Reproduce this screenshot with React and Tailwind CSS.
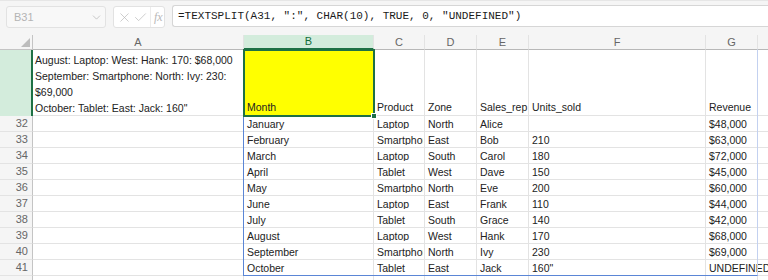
import { X, Check, ChevronDown } from "lucide-react";

const cols = [
  { k: "A", w: "w-[211px]" },
  { k: "B", w: "w-[130px]" },
  { k: "C", w: "w-[51px]" },
  { k: "D", w: "w-[52px]" },
  { k: "E", w: "w-[52px]" },
  { k: "F", w: "w-[177px]" },
  { k: "G", w: "w-[52px]" },
];

const rows = [
  [32, "January", "Laptop", "North", "Alice", "", "$48,000"],
  [33, "February", "Smartphone", "East", "Bob", "210", "$63,000"],
  [34, "March", "Laptop", "South", "Carol", "180", "$72,000"],
  [35, "April", "Tablet", "West", "Dave", "150", "$45,000"],
  [36, "May", "Smartphone", "North", "Eve", "200", "$60,000"],
  [37, "June", "Laptop", "East", "Frank", "110", "$44,000"],
  [38, "July", "Tablet", "South", "Grace", "140", "$42,000"],
  [39, "August", "Laptop", "West", "Hank", "170", "$68,000"],
  [40, "September", "Smartphone", "North", "Ivy", "230", "$69,000"],
  [41, "October", "Tablet", "East", "Jack", "160\"", "UNDEFINED"],
];

const cell = "shrink-0 border-r border-b border-[#e3e3e3] flex items-end pl-[3px] whitespace-nowrap";

export default function App() {
  return (
    <div className="h-[280px] w-[768px] overflow-hidden bg-white text-[#222] font-['Liberation_Sans',Arial,sans-serif]">
      {/* formula bar */}
      <div className="flex h-[35px] items-start border-t border-[#e6e6e6] bg-[#f5f5f5] pt-[4px]">
        <div className="ml-[6px] mt-[1px] flex h-[22px] w-[100px] items-center justify-between rounded-[3px] border border-[#e2e2e2] bg-[#f8f8f8] pl-[7px] pr-[2px] text-[11px] text-[#b4b4b4]">
          <span>B31</span>
          <ChevronDown size={13} strokeWidth={1.3} />
        </div>
        <div className="ml-[7px] mt-[1px] flex h-[22px] w-[52px] items-center rounded-[3px] border border-[#e2e2e2] bg-white pl-[3px] text-[#b8b8b8]">
          <X size={15} strokeWidth={1.1} />
          <Check size={15} strokeWidth={1.1} className="ml-[1px]" />
          <span className="ml-[2px] flex h-full items-center border-l border-[#ececec] pl-[3px] font-['Liberation_Serif',serif] text-[12px] italic leading-none">fx</span>
        </div>
        <div className="ml-[7px] flex h-[22px] flex-1 items-center rounded-l-[3px] border border-r-0 border-[#d6d6d6] bg-white pl-[5px] font-['Liberation_Mono',monospace] text-[11px] text-[#1a1a1a]">
          =TEXTSPLIT(A31, ":", CHAR(10), TRUE, 0, "UNDEFINED")
        </div>
      </div>

      {/* sheet */}
      <div className="relative">
        {/* column headers */}
        <div className="flex h-[15px] text-[11px] leading-none text-[#666]">
          <div className="relative w-[33px] shrink-0 border-r border-b border-[#c4c4c4] bg-[#f5f5f5]">
            <svg className="absolute right-[2px] bottom-[2px]" width="9" height="9" viewBox="0 0 9 9">
              <polygon points="9,0 9,9 0,9" fill="#bdbdbd" />
            </svg>
          </div>
          {cols.map((c) =>
            c.k === "B" ? (
              <div key={c.k} className={`${c.w} shrink-0 flex items-center justify-center border-r border-b-2 border-r-[#e3e3e3] border-b-[#1e7145] bg-[#d3ecdc] text-[#146c3a]`}>
                {c.k}
              </div>
            ) : (
              <div key={c.k} className={`${c.w} shrink-0 flex items-center justify-center border-r border-b border-r-[#e3e3e3] border-b-[#b8b8b8] bg-[#f5f5f5]`}>
                {c.k}
              </div>
            )
          )}
          <div className="flex-1 border-b border-[#b8b8b8] bg-[#f5f5f5]" />
        </div>

        {/* row 31 */}
        <div className="flex h-[66px] text-[10.5px] leading-[16px]">
          <div className="w-[33px] shrink-0 border-r-2 border-[#1e7145] bg-[#d3ecdc]" />
          <div className="w-[211px] shrink-0 border-r border-b border-[#e3e3e3] pl-[2px] pt-[2px]">
            <div>August: Laptop: West: Hank: 170: $68,000</div>
            <div>September: Smartphone: North: Ivy: 230:</div>
            <div>$69,000</div>
            <div>October: Tablet: East: Jack: 160"</div>
          </div>
          <div className={`${cell} w-[130px] bg-[#ffff00]`}>Month</div>
          <div className={`${cell} w-[51px]`}>Product</div>
          <div className={`${cell} w-[52px]`}>Zone</div>
          <div className={`${cell} w-[52px]`}>Sales_rep</div>
          <div className={`${cell} w-[177px]`}>Units_sold</div>
          <div className={`${cell} w-[52px]`}>Revenue</div>
          <div className="flex-1 border-b border-[#e3e3e3]" />
        </div>

        {/* rows 32-41 */}
        {rows.map((r) => (
          <div key={r[0]} className="flex h-[16px] text-[10.5px] leading-none">
            <div className="flex w-[33px] shrink-0 items-center justify-end border-r border-b border-r-[#c4c4c4] border-b-[#e3e3e3] bg-[#f5f5f5] pr-[4px] text-[11px] text-[#666]">
              {r[0]}
            </div>
            <div className={`${cell} w-[211px] pb-[2px]`} />
            <div className={`${cell} w-[130px] pb-[2px]`}>{r[1]}</div>
            <div className={`${cell} w-[51px] pb-[2px]`}>
              <span className="block w-[46px] overflow-hidden">{r[2]}</span>
            </div>
            <div className={`${cell} w-[52px] pb-[2px]`}>{r[3]}</div>
            <div className={`${cell} w-[52px] pb-[2px]`}>{r[4]}</div>
            <div className={`${cell} w-[177px] pb-[2px]`}>{r[5]}</div>
            <div className={`${cell} w-[52px] overflow-visible pb-[2px]`}>{r[6]}</div>
            <div className="flex-1 border-b border-[#e3e3e3]" />
          </div>
        ))}
        <div className="flex h-[10px]">
          <div className="w-[33px] shrink-0 border-r border-[#c4c4c4] bg-[#f5f5f5]" />
          <div className="w-[211px] shrink-0 border-r border-[#e3e3e3]" />
          <div className="w-[130px] shrink-0 border-r border-[#e3e3e3]" />
          <div className="w-[51px] shrink-0 border-r border-[#e3e3e3]" />
          <div className="w-[52px] shrink-0 border-r border-[#e3e3e3]" />
          <div className="w-[52px] shrink-0 border-r border-[#e3e3e3]" />
          <div className="w-[177px] shrink-0 border-r border-[#e3e3e3]" />
          <div className="w-[52px] shrink-0 border-r border-[#e3e3e3]" />
        </div>

        {/* spill range border */}
        <div className="pointer-events-none absolute left-[243px] top-[14px] h-[227px] w-[515px] border border-[#5b86d6] border-r-[#c3d1f0] border-t-transparent" />
        {/* active cell */}
        <div className="pointer-events-none absolute left-[243px] top-[14px] h-[68px] w-[132px] border-2 border-[#1e7145]">
          <div className="absolute -right-[4px] -bottom-[4px] h-[6px] w-[6px] border border-white bg-[#1e7145]" />
        </div>
      </div>
    </div>
  );
}
